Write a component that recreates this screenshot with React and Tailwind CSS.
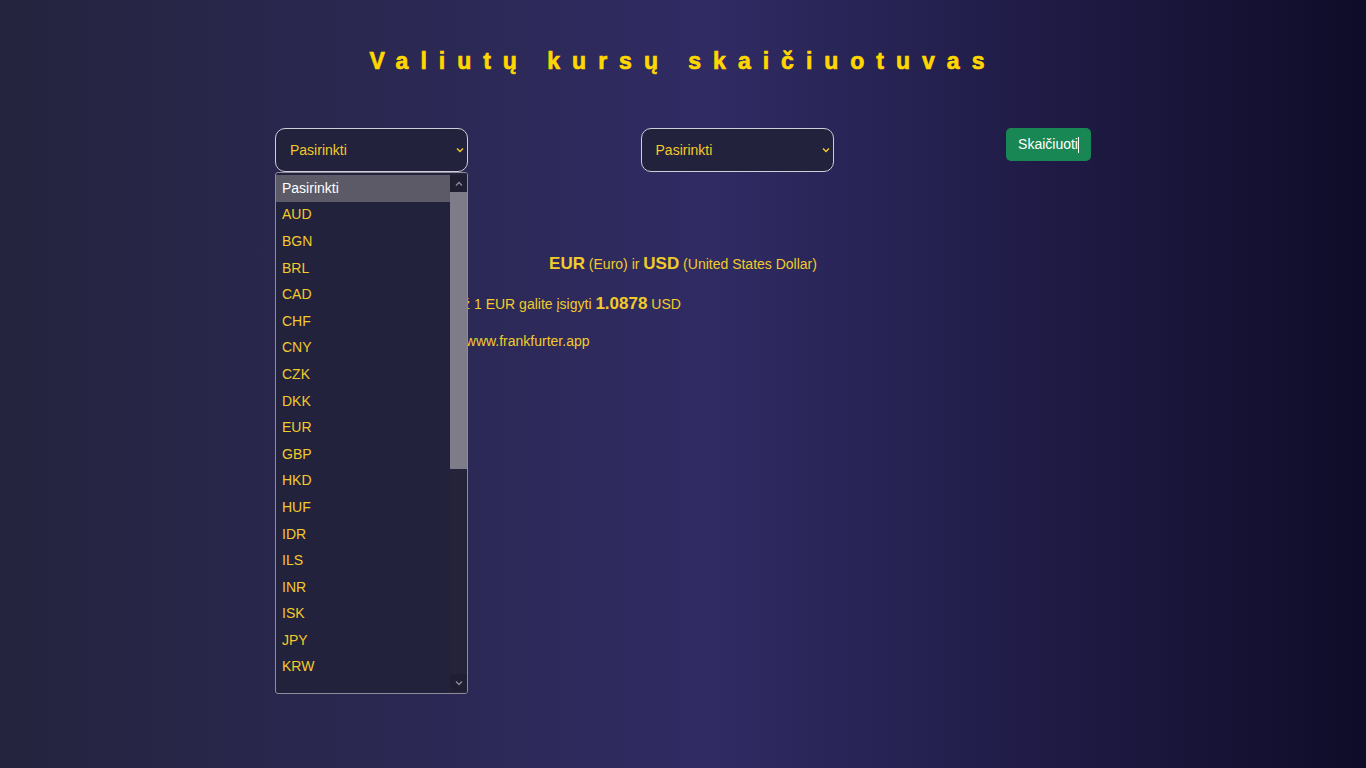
import React from 'react'

const CURRENCIES = [
  'Pasirinkti', 'AUD', 'BGN', 'BRL', 'CAD', 'CHF', 'CNY', 'CZK', 'DKK', 'EUR',
  'GBP', 'HKD', 'HUF', 'IDR', 'ILS', 'INR', 'ISK', 'JPY', 'KRW',
]

function Chevron({ className = '' }) {
  return (
    <svg width="8" height="6" viewBox="0 0 8 6" className={className}>
      <polyline points="1,1.5 4,4.5 7,1.5" fill="none" stroke="currentColor" strokeWidth="1.4" />
    </svg>
  )
}

function SelectBox({ open }) {
  return (
    <div className="relative">
      <div className="w-[193px] h-[44px] rounded-[10px] border border-[#cfcdd9] bg-[#23223d] flex items-center justify-between pl-[14px] pr-[3px] text-[14px] text-[#f2cb2a]">
        <span>Pasirinkti</span>
        <Chevron className="text-[#f2cb2a]" />
      </div>

      {open && (
        <div className="absolute left-0 top-[44px] w-[193px] h-[522px] rounded-[3px] border border-[#8d8b9c] bg-[#23223d] flex overflow-hidden z-10">
          {/* options */}
          <div className="flex-1 pt-[2px] overflow-hidden">
            {CURRENCIES.map((c, i) => (
              <div
                key={c}
                className={`h-[26.6px] flex items-center px-[6px] text-[14px] ${
                  i === 0 ? 'bg-[#5b5a66] text-white' : 'text-[#f2cb2a]'
                }`}
              >
                {c}
              </div>
            ))}
          </div>

          {/* scrollbar */}
          <div className="w-[17px] pt-[2px] pb-[2px] flex flex-col bg-[#252339]">
            <div className="h-[17px] bg-[#1f1e33] flex items-center justify-center text-[#8a899a]">
              <Chevron className="rotate-180" />
            </div>
            <div className="h-[277px] bg-[#7d7c88]" />
            <div className="flex-1" />
            <div className="h-[17px] bg-[#1f1e33] flex items-center justify-center text-[#8a899a]">
              <Chevron />
            </div>
          </div>
        </div>
      )}
    </div>
  )
}

export default function App() {
  return (
    <div
      className="h-[768px] w-full bg-[linear-gradient(to_right,#24243e,#302b63_52%,#0f0c29)] text-[#f2cb2a]"
      style={{ fontFamily: '"Liberation Sans", Arial, sans-serif' }}
    >
      <h1 className="pt-[46px] text-center text-[23px] leading-[30px] font-bold tracking-[12px] text-[#ffd700] [-webkit-text-stroke:0.7px_#ffd700]">
        Valiutų kursų skaičiuotuvas
      </h1>

      <div className="w-[816px] mx-auto mt-[52px] flex justify-between items-start relative z-10">
        <SelectBox open />
        <SelectBox />
        <button className="h-[33px] px-[12px] rounded-[5px] bg-[#198754] text-white text-[14px] flex items-center">
          Skaičiuoti<span className="inline-block w-px h-[16px] bg-white" />
        </button>
      </div>

      <div className="w-[816px] mx-auto">
        <p className="mt-[80px] text-center leading-[24px] text-[14px]">
          <b className="text-[17px]">EUR</b> (Euro) ir <b className="text-[17px]">USD</b> (United States Dollar)
        </p>
        <p className="mt-[18px] pl-[178px] leading-[20px] text-[14px]">
          Už 1 EUR galite įsigyti <b className="text-[17px]">1.0878</b> USD
        </p>
        <p className="mt-[17px] pl-[176px] leading-[20px] text-[14px]">
          Iš www.frankfurter.app
        </p>
      </div>
    </div>
  )
}
